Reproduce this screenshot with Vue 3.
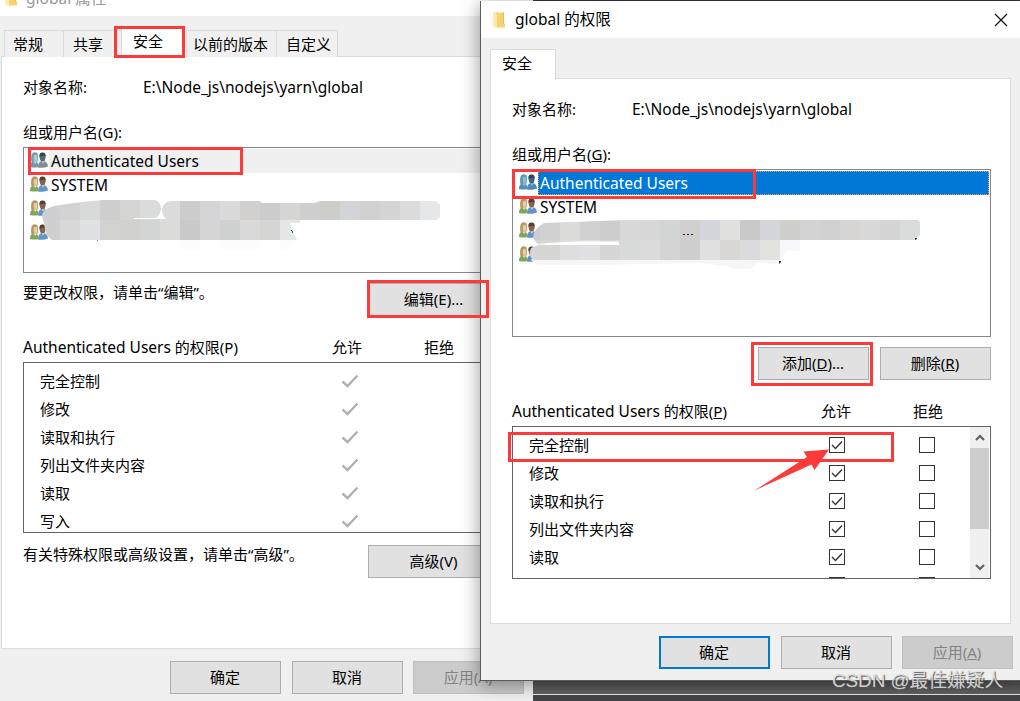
<script setup>
import { ref } from 'vue'

const activeTab = ref('安全')
const tabs = ['常规', '共享', '安全', '以前的版本', '自定义']
const users = ['Authenticated Users', 'SYSTEM', '', '']
const backPermissions = ['完全控制', '修改', '读取和执行', '列出文件夹内容', '读取', '写入']
const permissions = ref([
  { name: '完全控制', allow: true, deny: false },
  { name: '修改', allow: true, deny: false },
  { name: '读取和执行', allow: true, deny: false },
  { name: '列出文件夹内容', allow: true, deny: false },
  { name: '读取', allow: true, deny: false },
  { name: '', allow: true, deny: false }
])

// Mosaic tiles, 20px each
const backMosaic = [
  ['#cfcfd1', '#d2d2d3', '#d8dad9', '#cecece', '#d6d5d4', '#dadbdb', '#dbdbdb', '#cccccc', '#d5d5d7', '#dadada', '#d1d0ce', '#cccccc', '#d8d6d5', '#cfcfcf', '#cdcdca', '#d3d4d8', '#d1d1d1', '#d4d4d4', '#dbdbdb', '#e6e7e9'],
  ['#cfcfcf', '#d8d8d9', '#dfe1e3', '#d2d2d0', '#d1d1d0', '#d3d5d4', '#dbdbd9', '#c9c9c9', '#d5d5d5', '#ced1d0', '#d9d9d9', '#d5d5d3', '#e4e7e6']
]
const frontMosaic = [
  ['#cdcdcd', '#d1d1d1', '#dbdbda', '#d1d1d1', '#cdcdcd', '#d8d8d8', '#d7d7d7', '#d3d5d4', '#d2d0cf', '#d5d6da', '#e0e1df', '#c9c9c9', '#d4d5d8', '#cfcfcc', '#d3d3d4', '#d1d1d1', '#d6d5d3', '#d8d8d8', '#d4d4d4', '#d9dcdb'],
  ['#d6d6d6', '#d6d6d5', '#dedede', '#e0e0e2', '#d7d5d5', '#d9dbda', '#dbdbdb', '#d4d4d4', '#cfcfcf', '#e0e0e0', '#d9d7d5', '#dbdbdd', '#e2e2df', '#f8f8fb']
]
</script>

<template>
  <div class="desktop">
    <svg class="defs" width="0" height="0">
      <symbol id="people" viewBox="0 0 18 16">
        <path d="M8 15.500c0-4 1.500-6.500 4.500-6.500 3.300 0 5.300 2 5.500 5.500-3 1.200-7 1.500-10 1z" fill="#5f95cc" />
        <path d="M11 8.500l2 3L15 8.500z" fill="#dfe8ef" />
        <ellipse cx="12.600" cy="5.300" rx="2.900" ry="4.200" fill="#8c6244" />
        <path d="M9.500 5C9 1.500 10.500.5 12.500.5c2.600 0 3.600 1.700 3 4.500-1-1.500-3-2-6 0z" fill="#4d4039" />
        <path d="M0 15c0-4 1.500-5.500 4.500-5.500 2.500 0 3.800 1.500 4 5.500-3 .8-6 .8-8.500 0z" fill="#7da85c" />
        <path d="M1.300 9.500C.8 4 1.300.3 4.800.3 8 .3 8.500 3 7.800 9L5.500 11H3z" fill="#b39a64" />
        <ellipse cx="5.600" cy="6" rx="1.900" ry="3.300" fill="#ebc9a2" />
        <path d="M3.800 9.500l1.300 2.500L6.800 9.500z" fill="#f5e8d3" />
      </symbol>
      <symbol id="folder" viewBox="0 0 14 18">
        <path d="M3 1.500h9v11h1v4H3z" fill="#f6d36f" />
        <path d="M11 1.500h1v11h-1z" fill="#e5bd58" />
        <path d="M1 1.500h1.500L5 4v13l-1 .5-3-2.500z" fill="#fdebac" />
      </symbol>
    </svg>

    <div class="strip"></div>

    <!-- Properties window -->
    <section class="window back">
      <header class="titlebar">
        <svg class="folder"><use href="#folder" /></svg>
        <span class="latin">global 属性</span>
      </header>
      <nav class="tabs">
        <button v-for="tab in tabs" :key="tab" type="button" class="tab" :class="{ active: activeTab === tab }" @click="activeTab = tab">{{ tab }}</button>
      </nav>
      <div class="panel">
        <div class="object-row"><span class="object-label">对象名称:</span><span class="latin">E:\Node_js\nodejs\yarn\global</span></div>
        <div class="group-label">组或用户名(G):</div>
        <div class="user-list">
          <div v-for="(user, i) in users" :key="i" class="user" :class="{ selected: i === 0 }">
            <svg class="people"><use href="#people" /></svg>
            <span class="user-name latin">{{ user }}</span>
          </div>
        </div>
        <div class="hint edit-row">
          <span>要更改权限，请单击“编辑”。</span>
          <button type="button" class="btn wide">编辑(E)...</button>
        </div>
        <div class="perm-head">
          <span class="perm-title"><span class="latin">Authenticated Users</span> 的权限(P)</span><span class="col">允许</span><span class="col">拒绝</span>
        </div>
        <div class="perm-list">
          <div v-for="name in backPermissions" :key="name" class="perm">
            <span class="perm-name">{{ name }}</span>
            <svg class="grey-check" viewBox="0 0 18 14"><path d="M1.500 7.500l5 4.500L16.500 1.500" /></svg>
          </div>
        </div>
        <div class="hint advanced-row">
          <span>有关特殊权限或高级设置，请单击“高级”。</span>
          <button type="button" class="btn wide">高级(V)</button>
        </div>
      </div>
      <footer class="actions">
        <button type="button" class="btn">确定</button>
        <button type="button" class="btn">取消</button>
        <button type="button" class="btn disabled">应用(A)</button>
      </footer>
    </section>

    <svg class="mosaic back-mosaic" viewBox="40 200 400 52">
      <clipPath id="back-clip">
        <path d="M42 216Q42 208 60 205L82 202 102 200H155Q161 202 161 209 160 216 155 218H134V219H166Q162 215 162 209 164 201 172 201H259L262 203H314L320 201H435L440 204V217L437 220H300V223H290L292 230 297 240H52Q45 236 44 223Z" />
      </clipPath>
      <g clip-path="url(#back-clip)">
        <template v-for="(row, r) in backMosaic" :key="r">
          <rect v-for="(color, c) in row" :key="c" :x="40 + c * 20" :y="200 + r * 20" width="20" height="20" :fill="color" />
        </template>
      </g>
      <path d="M180 240h20v10h-20zM220 240h40v9h-40zM280 240h17q-2 10-17 10z" fill="#fcfcfc" />
      <path d="M291 230h1v1h-1z" fill="#222" />
      <path d="M292 231h1v2h-1z" fill="#147bd1" />
      <path d="M97 240h1v1h-1z" fill="#c8841a" />
    </svg>

    <!-- Permissions window -->
    <section class="window front">
      <header class="titlebar">
        <svg class="folder"><use href="#folder" /></svg>
        <span class="title latin">global 的权限</span>
        <svg class="close" viewBox="0 0 14 14"><path d="M1 1l12 12M13 1L1 13" /></svg>
      </header>
      <nav class="tabs">
        <button type="button" class="tab active">安全</button>
      </nav>
      <div class="panel">
        <div class="object-row"><span class="object-label">对象名称:</span><span class="latin">E:\Node_js\nodejs\yarn\global</span></div>
        <div class="group-label">组或用户名(<u>G</u>):</div>
        <div class="user-list">
          <div v-for="(user, i) in users" :key="i" class="user" :class="{ selected: i === 0 }">
            <svg class="people"><use href="#people" /></svg>
            <span class="user-name latin">{{ user }}</span>
          </div>
        </div>
        <div class="list-buttons">
          <button type="button" class="btn">添加(<u>D</u>)...</button>
          <button type="button" class="btn">删除(<u>R</u>)</button>
        </div>
        <div class="perm-head">
          <span class="perm-title"><span class="latin">Authenticated Users</span> 的权限(<u>P</u>)</span><span class="col">允许</span><span class="col">拒绝</span>
        </div>
        <div class="perm-list">
          <div class="perm-rows">
            <div v-for="perm in permissions" :key="perm.name" class="perm">
              <span class="perm-name">{{ perm.name }}</span>
              <span class="box" @click="perm.allow = !perm.allow">
                <svg v-if="perm.allow" viewBox="0 0 14 14"><path d="M2 7l3.500 3.500L12 3.500" /></svg>
              </span>
              <span class="box" @click="perm.deny = !perm.deny">
                <svg v-if="perm.deny" viewBox="0 0 14 14"><path d="M2 7l3.500 3.500L12 3.500" /></svg>
              </span>
            </div>
          </div>
          <div class="scrollbar">
            <svg viewBox="0 0 10 7"><path d="M1 6l4-4 4 4" /></svg>
            <div class="thumb"></div>
            <svg viewBox="0 0 10 7"><path d="M1 1l4 4 4-4" /></svg>
          </div>
        </div>
      </div>
      <footer class="actions">
        <button type="button" class="btn default">确定</button>
        <button type="button" class="btn">取消</button>
        <button type="button" class="btn disabled">应用(<u>A</u>)</button>
      </footer>
    </section>

    <svg class="mosaic front-mosaic" viewBox="520 220 400 52">
      <clipPath id="front-clip">
        <path d="M533 238Q533 229 544 223L626 220H918L920 222V235L915 240H800V251H787L780 260H533Q528 256 531 248L538 245Z" />
      </clipPath>
      <path d="M531 259H780V262L775 264 758 263 750 269H733L728 266H720L700 263 600 265H540Q533 264 531 259Z" fill="#f6f6f6" />
      <g clip-path="url(#front-clip)">
        <template v-for="(row, r) in frontMosaic" :key="r">
          <rect v-for="(color, c) in row" :key="c" :x="520 + c * 20" :y="220 + r * 20" width="20" height="20" :fill="color" />
        </template>
      </g>
      <path d="M532 240l6 4 10-1 28-1.500h43v3.500h-71l-8-.5-6 2-4-3z" fill="#fff" />
      <path d="M683 234h2v1h-2zM687 234h2v1h-2zM691 234h2v1h-2zM915 238h2v1l-2 1zM779 261h2v1l-2 2z" fill="#15283a" />
    </svg>

    <!-- Red annotations -->
    <div class="mark mark-tab"></div>
    <div class="mark mark-back-user"></div>
    <div class="mark mark-edit"></div>
    <div class="mark mark-front-user"></div>
    <div class="mark mark-add"></div>
    <div class="mark mark-full"></div>
    <svg class="arrow" viewBox="0 0 76 42"><path d="M75 .5L49.500 2.500 53 8 .5 41.500 57.500 15.500 60.500 21z" /></svg>
    <div class="watermark">CSDN @最佳嫌疑人</div>
  </div>
</template>

<style>
body {
  margin: 0;
  overflow: hidden;
}
</style>

<style scoped>
.desktop {
  position: relative;
  width: 1020px;
  height: 701px;
  overflow: hidden;
  background: #38363a;
  color: #000;
  font-family: "Noto Sans", "Noto Sans CJK SC", sans-serif;
  font-size: 15px;
  line-height: 20px;
}

.desktop * {
  box-sizing: border-box;
}

.latin {
  font-size: 15.5px;
}

.defs {
  position: absolute;
}

.strip {
  position: absolute;
  left: 533px;
  top: 680px;
  width: 487px;
  height: 21px;
  background: linear-gradient(#505050, #636363 14px, #e8e8e8 14px, #e8e8e8 15px, #454448 15px);
}

.window {
  position: absolute;
  display: flex;
  flex-direction: column;
  isolation: isolate;
  background: #f0f0f0;
  white-space: nowrap;
}

.back {
  left: 0;
  top: -16px;
  width: 533px;
  height: 717px;
}

.front {
  left: 480px;
  top: 1px;
  width: 548px;
  height: 680px;
  border: 1px solid #5b5b5b;
  border-top: 0;
  box-shadow: 0 3px 18px rgba(0, 0, 0, 0.4);
}

.titlebar {
  display: flex;
  align-items: center;
  flex: none;
  background: #fff;
}

.back .titlebar {
  height: 32px;
  padding: 0 0 5px 4px;
  color: #999;
}

.front .titlebar {
  height: 37px;
  padding-left: 11px;
}

.folder {
  width: 14px;
  height: 18px;
}

.back .folder {
  margin: 1px 8px 0 0;
}

.title {
  margin: -2px 0 0 9px;
  width: 479px;
}

.close {
  width: 14px;
  height: 14px;
  fill: none;
  stroke: #111;
  stroke-width: 1.2;
}

.tabs {
  position: relative;
  z-index: 1;
  display: flex;
  align-items: flex-end;
  flex: none;
}

.back .tabs {
  height: 41px;
  padding-left: 4px;
}

.front .tabs {
  height: 41px;
  padding-left: 9px;
}

.tab {
  height: 27px;
  padding: 0 9px 1px 8px;
  border: 1px solid #d9d9d9;
  border-bottom: 0;
  border-right: 0;
  background: #f0f0f0;
  color: #000;
  font: inherit;
  line-height: 20px;
  text-align: left;
}

.back .tab:nth-child(1) {
  width: 59px;
}

.back .tab:nth-child(2) {
  width: 58px;
  padding-left: 9px;
}

.back .tab:nth-child(3) {
  width: 65px;
  padding-left: 11px;
}

.back .tab:nth-child(4) {
  width: 90px;
  padding-left: 6px;
}

.back .tab:nth-child(5) {
  width: 62px;
  padding-left: 9px;
  border-right: 1px solid #d9d9d9;
}

.tab.active {
  height: 31px;
  margin-bottom: -1px;
  padding-bottom: 4px;
  background: #fff;
}

.front .tab.active {
  width: 66px;
  padding-left: 11px;
  border-right: 1px solid #d9d9d9;
}

.panel {
  flex: none;
  border: 1px solid #dcdcdc;
  background: #fff;
}

.back .panel {
  width: 523px;
  height: 593px;
  margin-left: 1px;
  margin-top: -1px;
  padding: 20px 21px 0;
}

.front .panel {
  width: 521px;
  height: 546px;
  margin: -1px 0 0 9px;
  padding: 20px 19px 0 21px;
}

.object-row {
  display: flex;
  height: 20px;
}

.object-label {
  width: 120px;
}

.group-label {
  height: 20px;
  margin-top: 25px;
}

.user-list {
  margin-top: 5px;
  border: 1px solid #828790;
}

.back .user-list {
  height: 126px;
  padding-top: 1px;
}

.front .user-list {
  height: 168px;
  padding: 1px 1px 0 0;
}

.user {
  display: flex;
  align-items: center;
  height: 24px;
  padding-left: 6px;
}

.people {
  flex: none;
  width: 18px;
  height: 16px;
  margin: -2px 1px 0 0;
}

.user-name {
  flex: 1;
  height: 24px;
  padding-left: 2px;
  line-height: 24px;
}

.back .selected .user-name {
  background: #f0f0f0;
}

.front .selected .user-name {
  padding-left: 1px;
  border: 1px dotted #ff9632;
  background: #0078d7;
  color: #fff;
  line-height: 22px;
}

.back .selected .people {
  filter: sepia(0.7) hue-rotate(150deg) brightness(0.85);
}

.front .selected .people {
  filter: sepia(1) hue-rotate(165deg) saturate(2.2) brightness(0.75);
}

.btn {
  width: 111px;
  height: 33px;
  padding: 0 1px 2px 0;
  border: 1px solid #adadad;
  background: #e1e1e1;
  color: #000;
  font: inherit;
  line-height: 20px;
}

.btn.wide {
  width: 134px;
  padding-right: 3px;
}

.btn.default {
  border: 2px solid #0078d7;
}

.btn.disabled {
  border-color: #bfbfbf;
  background: #cccccc;
  color: #838383;
}

.hint {
  display: flex;
  justify-content: space-between;
}

.hint span {
  margin-top: -1px;
}

.edit-row {
  height: 55px;
  padding-top: 10px;
}

.advanced-row {
  padding-top: 12px;
}

.perm-head {
  display: flex;
  height: 20px;
}

.back .perm-head {
  margin-top: 9px;
}

.perm-title {
  flex: none;
  width: 309px;
}

.col {
  flex: none;
  width: 92px;
}

.back .perm-list {
  height: 171px;
  margin-top: 5px;
  padding: 4px 0 0 16px;
  overflow: hidden;
  border: 1px solid #646464;
}

.perm {
  display: flex;
  align-items: center;
  height: 28px;
}

.back .perm-name {
  width: 301px;
}

.grey-check {
  width: 18px;
  height: 14px;
  fill: none;
  stroke: #b0b0b0;
  stroke-width: 2.4;
}

.actions {
  display: flex;
  flex: none;
  gap: 11px;
}

.back .actions {
  margin-top: 12px;
  padding-left: 170px;
}

.front .actions {
  margin-top: 12px;
  padding-left: 178px;
}

.actions .disabled {
  margin-left: -1px;
}

.list-buttons {
  display: flex;
  justify-content: flex-end;
  gap: 11px;
  margin-top: 10px;
}

.front .perm-head {
  margin-top: 21px;
}

.front .perm-list {
  display: flex;
  height: 153px;
  margin-top: 5px;
  padding-right: 1px;
  overflow: hidden;
  border: 1px solid #646464;
}

.perm-rows {
  flex: 1;
  padding: 4px 0 0 16px;
}

.front .perm-name {
  width: 300px;
}

.box {
  width: 16px;
  height: 16px;
  border: 1px solid #333;
  background: #fff;
}

.box + .box {
  margin-left: 74px;
}

.box svg {
  display: block;
  width: 14px;
  height: 14px;
  fill: none;
  stroke: #333;
  stroke-width: 1.4;
}

.scrollbar {
  display: flex;
  flex: none;
  flex-direction: column;
  align-items: center;
  width: 19px;
  padding: 7px 0 7px;
  background: #f0f0f0;
}

.scrollbar svg {
  flex: none;
  width: 10px;
  height: 7px;
  fill: none;
  stroke: #606060;
  stroke-width: 2.2;
}

.thumb {
  flex: none;
  width: 19px;
  height: 81px;
  margin: 7px 0 auto;
  background: #cdcdcd;
}

.mosaic {
  position: absolute;
  width: 400px;
  height: 52px;
}

.back-mosaic {
  left: 40px;
  top: 200px;
}

.front-mosaic {
  left: 520px;
  top: 220px;
}

.mark {
  position: absolute;
  border: 3px solid #fd3a3a;
}

.mark-tab {
  left: 114px;
  top: 26px;
  width: 71px;
  height: 32px;
}

.mark-back-user {
  left: 28px;
  top: 147px;
  width: 215px;
  height: 28px;
}

.mark-edit {
  left: 367px;
  top: 280px;
  width: 122px;
  height: 38px;
}

.mark-front-user {
  left: 512px;
  top: 169px;
  width: 244px;
  height: 30px;
}

.mark-add {
  left: 751px;
  top: 342px;
  width: 122px;
  height: 44px;
}

.mark-full {
  left: 508px;
  top: 432px;
  width: 386px;
  height: 30px;
}

.arrow {
  position: absolute;
  left: 754px;
  top: 449px;
  width: 76px;
  height: 42px;
  fill: #fd3a3a;
}

.watermark {
  position: absolute;
  left: 832px;
  top: 669px;
  color: rgba(225, 225, 225, 0.9);
  font-family: "Liberation Sans", "Noto Sans CJK SC", sans-serif;
  font-size: 18.800px;
  line-height: 24px;
  text-shadow: 1px 1px 1px #555;
  white-space: nowrap;
}
</style>
